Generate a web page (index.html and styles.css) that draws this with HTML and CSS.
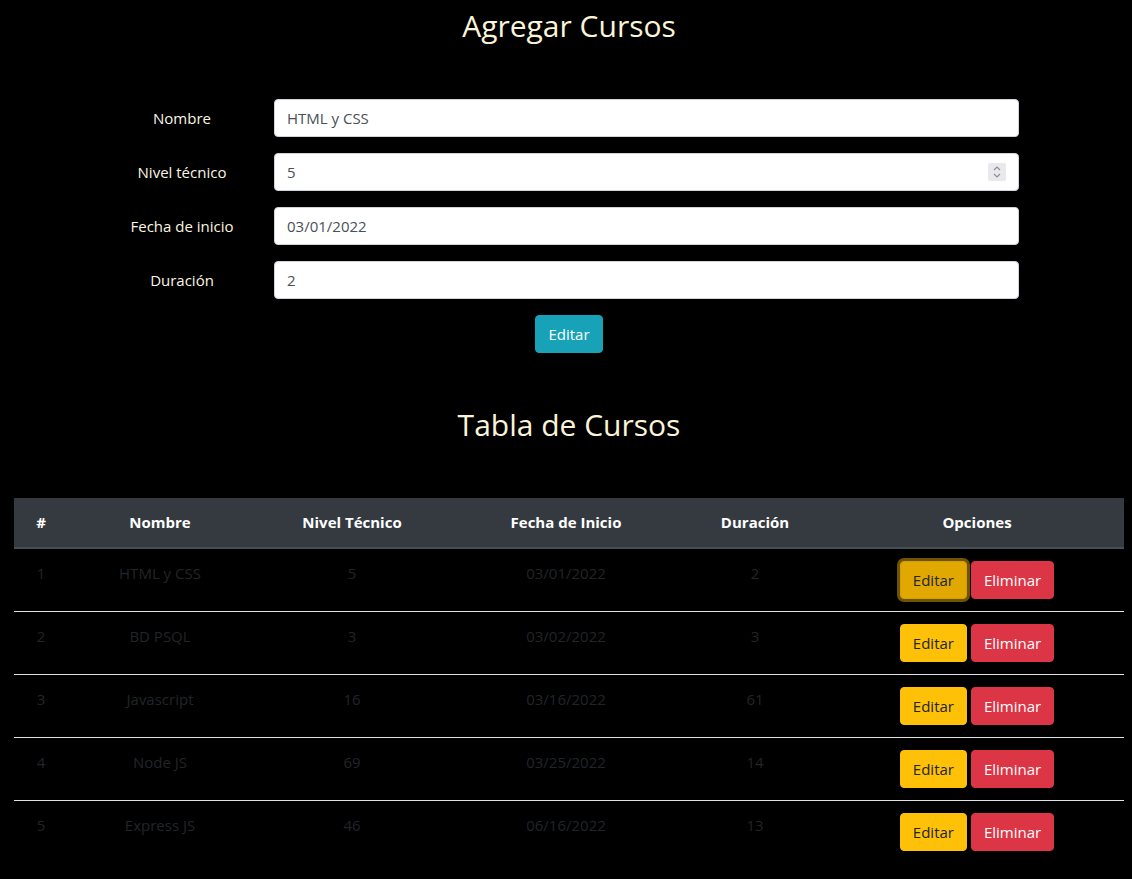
FILE: index.html
```html
<!DOCTYPE html>
<html lang="es">
<head>
<meta charset="utf-8">
<title>Cursos</title>
<link rel="stylesheet" href="styles.css">
</head>
<body>
<main class="page">
  <h2 class="title">Agregar Cursos</h2>
  <form class="course-form">
    <div class="form-row">
      <label class="form-label" for="nombre">Nombre</label>
      <input class="form-input" id="nombre" type="text" value="HTML y CSS">
    </div>
    <div class="form-row">
      <label class="form-label" for="nivel">Nivel técnico</label>
      <div class="input-wrap">
        <input class="form-input" id="nivel" type="text" value="5">
        <span class="spinner">
          <svg width="10" height="14" viewBox="0 0 10 14" fill="none" stroke="#8d8d96" stroke-width="1.2"><path d="M2 5 L5 2 L8 5"/><path d="M2 9 L5 12 L8 9"/></svg>
        </span>
      </div>
    </div>
    <div class="form-row">
      <label class="form-label" for="fecha">Fecha de inicio</label>
      <input class="form-input" id="fecha" type="text" value="03/01/2022">
    </div>
    <div class="form-row">
      <label class="form-label" for="duracion">Duración</label>
      <input class="form-input" id="duracion" type="text" value="2">
    </div>
    <div class="form-actions">
      <button type="button" class="btn btn-info">Editar</button>
    </div>
  </form>

  <h2 class="title title-table">Tabla de Cursos</h2>
  <table class="table">
    <thead>
      <tr>
        <th class="c1">#</th>
        <th class="c2">Nombre</th>
        <th class="c3">Nivel Técnico</th>
        <th class="c4">Fecha de Inicio</th>
        <th class="c5">Duración</th>
        <th class="c6">Opciones</th>
      </tr>
    </thead>
    <tbody>
      <tr>
        <td>1</td><td>HTML y CSS</td><td>5</td><td>03/01/2022</td><td>2</td>
        <td><button type="button" class="btn btn-warning is-focused">Editar</button> <button type="button" class="btn btn-danger">Eliminar</button></td>
      </tr>
      <tr>
        <td>2</td><td>BD PSQL</td><td>3</td><td>03/02/2022</td><td>3</td>
        <td><button type="button" class="btn btn-warning">Editar</button> <button type="button" class="btn btn-danger">Eliminar</button></td>
      </tr>
      <tr>
        <td>3</td><td>Javascript</td><td>16</td><td>03/16/2022</td><td>61</td>
        <td><button type="button" class="btn btn-warning">Editar</button> <button type="button" class="btn btn-danger">Eliminar</button></td>
      </tr>
      <tr>
        <td>4</td><td>Node JS</td><td>69</td><td>03/25/2022</td><td>14</td>
        <td><button type="button" class="btn btn-warning">Editar</button> <button type="button" class="btn btn-danger">Eliminar</button></td>
      </tr>
      <tr>
        <td>5</td><td>Express JS</td><td>46</td><td>06/16/2022</td><td>13</td>
        <td><button type="button" class="btn btn-warning">Editar</button> <button type="button" class="btn btn-danger">Eliminar</button></td>
      </tr>
    </tbody>
  </table>
</main>
</body>
</html>
```

FILE: styles.css
```css
* { box-sizing: border-box; }

html, body {
  margin: 0;
  padding: 0;
  background: #000;
}

body {
  font-family: "Open Sans", "Noto Sans", sans-serif;
  font-size: 15px;
  line-height: 24px;
  color: #212529;
}

.page {
  padding: 0 8px 0 14px;
}

.title {
  margin: 7px 0 0;
  font-size: 30px;
  font-weight: 400;
  line-height: 38px;
  text-align: center;
  color: #fbf5d8;
}

.course-form {
  margin-top: 54px;
}

.form-row {
  display: grid;
  grid-template-columns: 184px 745px;
  align-items: center;
  padding-left: 76px;
  margin-bottom: 16px;
}

.form-label {
  justify-self: center;
  color: #fbf5e2;
}

.input-wrap {
  position: relative;
}

.form-input {
  display: block;
  width: 745px;
  height: 38px;
  padding: 6px 12px;
  font-family: inherit;
  font-size: 15px;
  line-height: 24px;
  color: #495057;
  background: #fff;
  border: 1px solid #ced4da;
  border-radius: 4px;
  outline: none;
}

.spinner {
  position: absolute;
  right: 13px;
  top: 10px;
  width: 18px;
  height: 18px;
  background: #e9e9ed;
  border-radius: 2px;
  display: flex;
  align-items: center;
  justify-content: center;
}

.form-actions {
  display: flex;
  justify-content: center;
}

.btn {
  display: inline-block;
  height: 38px;
  padding: 6px 12px;
  font-family: inherit;
  font-size: 15px;
  line-height: 24px;
  border: 1px solid transparent;
  border-radius: 4px;
  cursor: pointer;
  vertical-align: middle;
}

.btn-info {
  background: #17a2b8;
  border-color: #17a2b8;
  color: #fff;
}

.btn-warning {
  background: #ffc107;
  border-color: #ffc107;
  color: #212529;
}

.btn-warning.is-focused {
  background: #e0a800;
  border-color: #d39e00;
  box-shadow: 0 0 0 3px #6e5305;
}

.btn-danger {
  background: #dc3545;
  border-color: #dc3545;
  color: #fff;
}

.title-table {
  margin-top: 53px;
}

.table {
  width: 1110px;
  margin-top: 54px;
  border-collapse: collapse;
  table-layout: fixed;
}

.table th,
.table td {
  padding: 12px;
  text-align: center;
  vertical-align: top;
}

.table thead th {
  padding-bottom: 13px;
  background: #343a40;
  color: #fff;
  font-weight: 700;
  border-bottom: 2px solid #454d55;
}

.table tbody td {
  border-top: 1px solid #dee2e6;
  color: #212529;
}

.table tbody tr:first-child td {
  border-top: none;
}

.c1 { width: 54px; }
.c2 { width: 184px; }
.c3 { width: 200px; }
.c4 { width: 228px; }
.c5 { width: 150px; }
.c6 { width: 294px; }
```
